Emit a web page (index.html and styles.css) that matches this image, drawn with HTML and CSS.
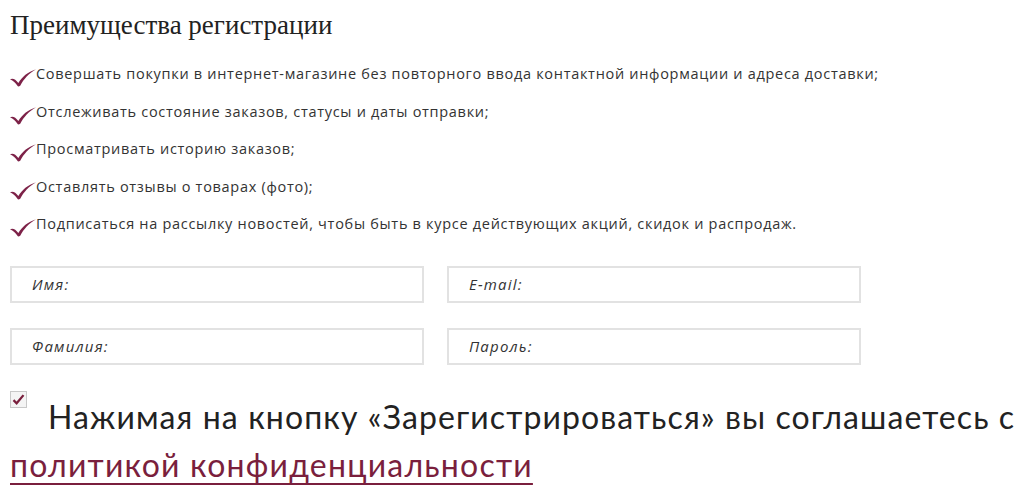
FILE: index.html
```html
<!DOCTYPE html>
<html lang="ru">
<head>
    <meta charset="UTF-8">
    <title>Регистрация</title>
    <link rel="stylesheet" href="styles.css">
</head>
<body>
    <div class="reg-page">
        <h2 class="reg-title">Преимущества регистрации</h2>

        <ul class="benefits">
            <li class="benefit">
                <svg class="benefit-icon" viewBox="0 0 28 20"><path d="M0 12 C3 10.5 6 12 9 16 C13 9 19 4 28 1 C20 6 15 11 11 19 C9.5 20 8.5 20 8 19 C6 16 3.5 13.5 0 12 Z"/></svg>
                Совершать покупки в интернет-магазине без повторного ввода контактной информации и адреса доставки;
            </li>
            <li class="benefit">
                <svg class="benefit-icon" viewBox="0 0 28 20"><path d="M0 12 C3 10.5 6 12 9 16 C13 9 19 4 28 1 C20 6 15 11 11 19 C9.5 20 8.5 20 8 19 C6 16 3.5 13.5 0 12 Z"/></svg>
                Отслеживать состояние заказов, статусы и даты отправки;
            </li>
            <li class="benefit">
                <svg class="benefit-icon" viewBox="0 0 28 20"><path d="M0 12 C3 10.5 6 12 9 16 C13 9 19 4 28 1 C20 6 15 11 11 19 C9.5 20 8.5 20 8 19 C6 16 3.5 13.5 0 12 Z"/></svg>
                Просматривать историю заказов;
            </li>
            <li class="benefit">
                <svg class="benefit-icon" viewBox="0 0 28 20"><path d="M0 12 C3 10.5 6 12 9 16 C13 9 19 4 28 1 C20 6 15 11 11 19 C9.5 20 8.5 20 8 19 C6 16 3.5 13.5 0 12 Z"/></svg>
                Оставлять отзывы о товарах (фото);
            </li>
            <li class="benefit">
                <svg class="benefit-icon" viewBox="0 0 28 20"><path d="M0 12 C3 10.5 6 12 9 16 C13 9 19 4 28 1 C20 6 15 11 11 19 C9.5 20 8.5 20 8 19 C6 16 3.5 13.5 0 12 Z"/></svg>
                Подписаться на рассылку новостей, чтобы быть в курсе действующих акций, скидок и распродаж.
            </li>
        </ul>

        <form class="reg-form">
            <input class="reg-input" type="text" placeholder="Имя:">
            <input class="reg-input" type="email" placeholder="E-mail:">
            <input class="reg-input" type="text" placeholder="Фамилия:">
            <input class="reg-input" type="password" placeholder="Пароль:">
        </form>

        <div class="agree">
            <div class="agree-row">
                <span class="agree-box">
                    <svg viewBox="0 0 12 12"><path d="M2 6.5 L4.5 9 L10 2.5" fill="none" stroke="#7a1f3d" stroke-width="1.8"/></svg>
                </span>
                <span class="agree-text">Нажимая на кнопку «Зарегистрироваться» вы соглашаетесь с</span>
            </div>
            <a class="agree-link" href="#">политикой конфиденциальности</a>
        </div>
    </div>
</body>
</html>
```

FILE: styles.css
```css
* {
    margin: 0;
    padding: 0;
    box-sizing: border-box;
}

body {
    background: #fff;
    font-family: 'Open Sans', Arial, sans-serif;
    color: #333;
}

.reg-page {
    padding: 9px 10px 0;
}

.reg-title {
    font-family: 'Liberation Serif', 'Times New Roman', serif;
    font-weight: normal;
    font-size: 27px;
    color: #222;
    line-height: 32px;
    margin-bottom: 14px;
}

.benefits {
    list-style: none;
}

.benefit {
    display: flex;
    align-items: center;
    height: 37.5px;
    font-size: 14.5px;
    letter-spacing: 0.7px;
    color: #333;
}

.benefit-icon {
    width: 26px;
    height: 19px;
    fill: #7d2248;
    margin-top: 8px;
    flex-shrink: 0;
}

.reg-form {
    display: grid;
    grid-template-columns: 414px 414px;
    column-gap: 23px;
    row-gap: 25px;
    margin-top: 23px;
}

.reg-input {
    height: 37px;
    border: 2px solid #e2e2e2;
    padding: 0 20px;
    font-family: 'Open Sans', Arial, sans-serif;
    font-size: 15px;
    font-style: italic;
    letter-spacing: 1.2px;
    color: #333;
    outline: none;
}

.reg-input::placeholder {
    color: #333;
}

.agree {
    margin-top: 20px;
    font-family: Lato, 'Open Sans', sans-serif;
    font-size: 32px;
    line-height: 48px;
    color: #222;
    white-space: nowrap;
}

.agree-row {
    display: flex;
    align-items: flex-start;
}

.agree-box {
    width: 17px;
    height: 17px;
    border: 1px solid #c8c8c8;
    background: #f4f4f4;
    margin-top: 6px;
    margin-right: 21px;
    flex-shrink: 0;
}

.agree-box svg {
    display: block;
    width: 15px;
    height: 15px;
}

.agree-text {
    letter-spacing: 1.1px;
    margin-top: 8px;
}

.agree-link {
    display: block;
    color: #7a1f3d;
    text-decoration: underline;
    text-underline-offset: 6px;
    text-decoration-thickness: 2px;
    letter-spacing: 1.2px;
}
```
